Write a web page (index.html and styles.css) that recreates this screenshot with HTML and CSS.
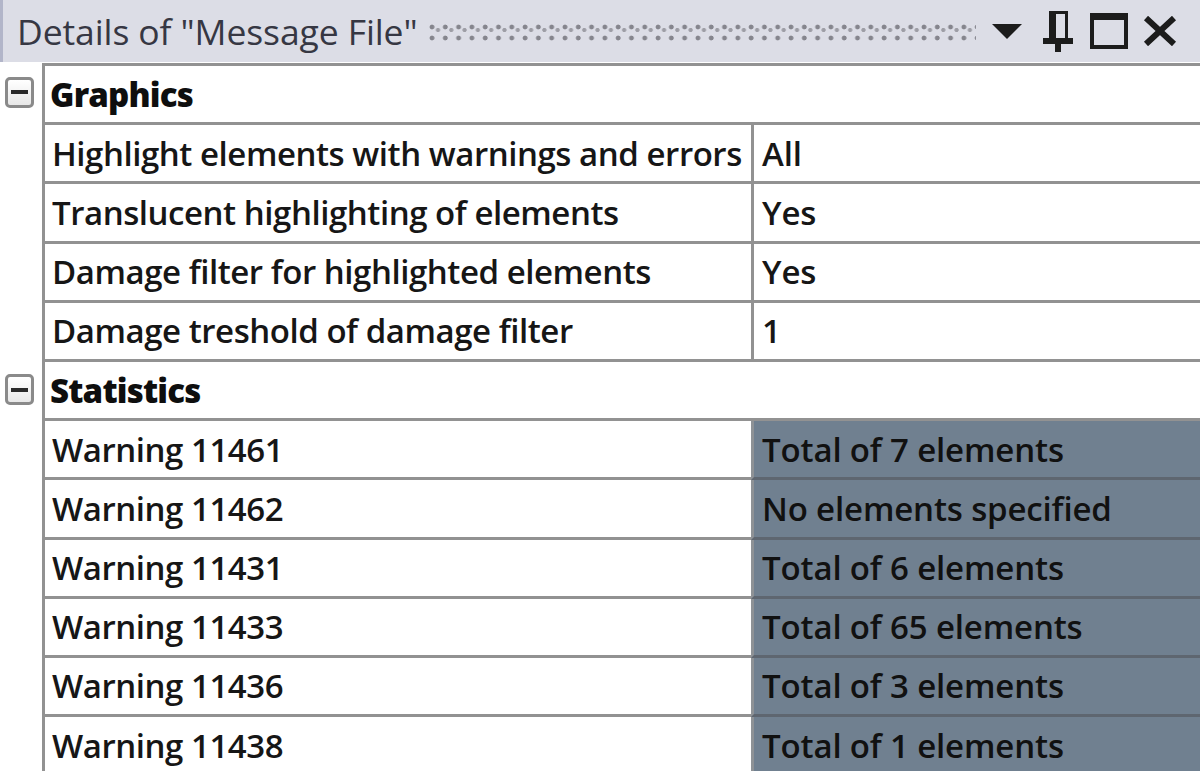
FILE: index.html
```html
<!DOCTYPE html>
<html>
<head>
<meta charset="utf-8">
<link rel="stylesheet" href="styles.css">
</head>
<body>
<div class="panel">
  <div class="titlebar">
    <span class="title">Details of "Message File"</span>
    <span class="grip"></span>
    <span class="tools">
      <svg class="ic-drop" width="30" height="16" viewBox="0 0 30 16"><polygon points="0,0 30,0 15,15" fill="#1c1c1c"/></svg>
      <svg class="ic-pin" width="30" height="44" viewBox="0 0 30 44">
        <rect x="6" y="2" width="7" height="28" fill="#1c1c1c"/>
        <rect x="22" y="2" width="3" height="28" fill="#1c1c1c"/>
        <rect x="6" y="2" width="19" height="3" fill="#1c1c1c"/>
        <rect x="0" y="29" width="30" height="6" fill="#1c1c1c"/>
        <rect x="12" y="35" width="6" height="8" fill="#1c1c1c"/>
      </svg>
      <svg class="ic-max" width="38" height="36" viewBox="0 0 38 36">
        <rect x="0" y="0" width="38" height="7" fill="#1c1c1c"/>
        <rect x="0" y="0" width="4" height="36" fill="#1c1c1c"/>
        <rect x="34" y="0" width="4" height="36" fill="#1c1c1c"/>
        <rect x="0" y="32" width="38" height="4" fill="#1c1c1c"/>
      </svg>
      <svg class="ic-close" width="34" height="30" viewBox="0 0 34 30">
        <path d="M3 2 L31 28 M31 2 L3 28" stroke="#1c1c1c" stroke-width="6"/>
      </svg>
    </span>
  </div>
  <div class="grid">
    <div class="row cat first">
      <div class="margin"><span class="toggle"></span></div>
      <div class="cells"><div class="catlabel">Graphics</div></div>
    </div>
    <div class="row">
      <div class="margin"></div>
      <div class="cells"><div class="name">Highlight elements with warnings and errors</div><div class="value">All</div></div>
    </div>
    <div class="row">
      <div class="margin"></div>
      <div class="cells"><div class="name">Translucent highlighting of elements</div><div class="value">Yes</div></div>
    </div>
    <div class="row">
      <div class="margin"></div>
      <div class="cells"><div class="name">Damage filter for highlighted elements</div><div class="value">Yes</div></div>
    </div>
    <div class="row">
      <div class="margin"></div>
      <div class="cells"><div class="name">Damage treshold of damage filter</div><div class="value">1</div></div>
    </div>
    <div class="row cat">
      <div class="margin"><span class="toggle"></span></div>
      <div class="cells"><div class="catlabel">Statistics</div></div>
    </div>
    <div class="row stat">
      <div class="margin"></div>
      <div class="cells"><div class="name">Warning 11461</div><div class="value">Total of 7 elements</div></div>
    </div>
    <div class="row stat">
      <div class="margin"></div>
      <div class="cells"><div class="name">Warning 11462</div><div class="value">No elements specified</div></div>
    </div>
    <div class="row stat">
      <div class="margin"></div>
      <div class="cells"><div class="name">Warning 11431</div><div class="value">Total of 6 elements</div></div>
    </div>
    <div class="row stat">
      <div class="margin"></div>
      <div class="cells"><div class="name">Warning 11433</div><div class="value">Total of 65 elements</div></div>
    </div>
    <div class="row stat">
      <div class="margin"></div>
      <div class="cells"><div class="name">Warning 11436</div><div class="value">Total of 3 elements</div></div>
    </div>
    <div class="row stat">
      <div class="margin"></div>
      <div class="cells"><div class="name">Warning 11438</div><div class="value">Total of 1 elements</div></div>
    </div>
  </div>
</div>
</body>
</html>
```

FILE: styles.css
```css
html, body {
  margin: 0;
  padding: 0;
  background: #ffffff;
  overflow: hidden;
}

.panel {
  width: 1200px;
  height: 771px;
  overflow: hidden;
  font-family: "Open Sans", "Noto Sans", sans-serif;
  color: #161616;
}

.titlebar {
  height: 62px;
  box-sizing: border-box;
  background: #dcdde6;
  border-left: 3px solid #b2b5c9;
  display: flex;
  align-items: center;
  padding-left: 14px;
  padding-right: 23px;
}

.title {
  font-size: 35.5px;
  font-weight: 500;
  color: #363743;
  white-space: nowrap;
  letter-spacing: -0.1px;
}

.grip {
  flex: 1;
  height: 18px;
  margin-left: 12px;
  margin-right: 16px;
  margin-top: 2px;
  background-image:
    radial-gradient(circle at 3px 4px, #85858d 2px, transparent 2.8px),
    radial-gradient(circle at 9px 7px, #9d9da5 1.7px, transparent 2.5px),
    radial-gradient(circle at 3px 15px, #85858d 2px, transparent 2.8px);
  background-size: 13.3px 18px;
  background-repeat: repeat-x;
}

.tools {
  display: flex;
  align-items: center;
}

.ic-drop { margin-top: 2px; }
.ic-pin { margin-left: 21px; }
.ic-max { margin-left: 17px; }
.ic-close { margin-left: 15px; }

.grid {
  padding-top: 1px;
}

.row {
  display: flex;
  height: 59.2px;
}

.row.first {
  height: 62.2px;
}

.margin {
  width: 42px;
  flex: none;
  display: flex;
  align-items: center;
  justify-content: center;
}

.toggle {
  width: 29px;
  height: 31px;
  box-sizing: border-box;
  border: 3px solid #8a8a8a;
  border-radius: 5px;
  background: linear-gradient(#ffffff, #e8e8e8);
  margin-left: -3px;
  margin-top: -4px;
  display: flex;
  align-items: center;
  justify-content: center;
}

.toggle::after {
  content: "";
  width: 17px;
  height: 4px;
  background: #2a2a2a;
}

.cells {
  flex: 1;
  display: flex;
  border-left: 3px solid #929292;
}

.row.first .cells {
  border-top: 3px solid #929292;
}

.catlabel {
  flex: 1;
  box-sizing: border-box;
  border-bottom: 3px solid #929292;
  padding-left: 5px;
  display: flex;
  align-items: center;
  font-size: 33px;
  font-weight: 800;
  color: #0e0e0e;
  letter-spacing: -0.8px;
}

.name {
  width: 706px;
  flex: none;
  box-sizing: border-box;
  border-bottom: 3px solid #929292;
  padding-left: 7px;
  display: flex;
  align-items: center;
  font-size: 33px;
  font-weight: 600;
  white-space: nowrap;
  letter-spacing: -0.45px;
}

.value {
  flex: 1;
  box-sizing: border-box;
  border-left: 3px solid #929292;
  border-bottom: 3px solid #929292;
  padding-left: 8px;
  display: flex;
  align-items: center;
  font-size: 33px;
  font-weight: 600;
  white-space: nowrap;
  letter-spacing: -0.15px;
}

.stat .value {
  background: #708090;
  border-bottom-color: #5e6670;
  border-left-color: #8e9296;
  color: #111111;
}
```
